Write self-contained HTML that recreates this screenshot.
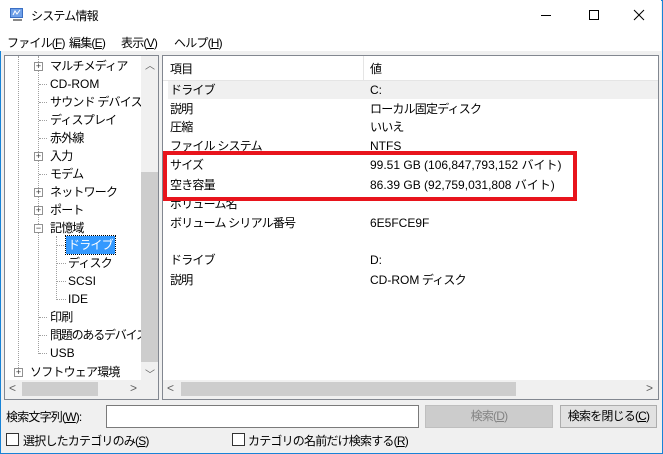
<!DOCTYPE html>
<html><head><meta charset="utf-8"><style>
*{margin:0;padding:0;box-sizing:border-box}
body{width:663px;height:454px;overflow:hidden;font-family:"Liberation Sans","Noto Sans CJK JP",sans-serif;font-size:12px;letter-spacing:-0.8px;color:#000;background:#f0f0f0;position:relative}
.n{letter-spacing:0}
.win{position:absolute;left:0;top:0;width:663px;height:454px;border:1px solid #1883d7}
.abs{position:absolute;white-space:nowrap}
.title{position:absolute;left:0;top:0;width:661px;height:31px;background:#fff}
.menu{position:absolute;left:0;top:31px;width:661px;height:20px;background:#fff}
.pane{position:absolute;background:#fff;border:1px solid #828790}
.t{position:absolute;white-space:nowrap;line-height:18px}
.dl{position:absolute;border-left:1px dotted #a0a0a0}
.dh{position:absolute;border-top:1px dotted #a0a0a0;height:0}
.ex{position:absolute;width:9px;height:9px;border:1px solid #919191;background:#fff;font-size:9px;line-height:7px;text-align:center;color:#333;letter-spacing:0}
.sb{position:absolute;background:#f0f0f0}
.btn{position:absolute;border:1px solid #adadad;background:#e1e1e1;text-align:center;line-height:20px}
.cb{position:absolute;width:13px;height:13px;border:1px solid #333;background:#fff}
u{text-decoration:underline}
</style></head><body>
<div class="win"></div>
<div class="title"></div>
<svg class="abs" style="left:9px;top:7px" width="16" height="16" viewBox="0 0 16 16"><rect x="1" y="1" width="13" height="10" fill="#3a6fc4"/><rect x="2" y="2" width="11" height="8" fill="#6fa0e8"/><path d="M4 8 L6 4 L8 7 L11 3" stroke="#fff" fill="none"/><rect x="4" y="12" width="9" height="2" fill="#888"/></svg>
<div class="abs" style="left:31px;top:7px;font-size:12px">システム情報</div>
<div class="abs" style="left:541px;top:15px;width:10px;height:1px;background:#000"></div>
<div class="abs" style="left:589px;top:10px;width:10px;height:10px;border:1px solid #000"></div>
<svg class="abs" style="left:633px;top:9px" width="12" height="12"><path d="M1 1 L11 11 M11 1 L1 11" stroke="#000" stroke-width="1"/></svg>
<div class="menu"></div>
<div class="abs" style="left:7px;top:34px">ファイル(<u>F</u>)</div>
<div class="abs" style="left:69px;top:34px">編集(<u>E</u>)</div>
<div class="abs" style="left:121px;top:34px">表示(<u>V</u>)</div>
<div class="abs" style="left:174px;top:34px">ヘルプ(<u>H</u>)</div>

<div class="pane" style="left:4px;top:55px;width:155px;height:345px"></div>
<div class="dl" style="left:18px;top:56px;height:316px"></div>
<div class="dl" style="left:38px;top:56px;height:298px"></div>
<div class="dl" style="left:56px;top:236px;height:64px"></div>
<div class="ex" style="left:34px;top:62px">+</div>
<div class="t" style="left:50px;top:57px">マルチメディア</div>
<div class="dh" style="left:39px;top:84px;width:8px"></div><div class="t n" style="left:50px;top:75px">CD-ROM</div>
<div class="dh" style="left:39px;top:102px;width:8px"></div><div class="t" style="left:50px;top:93px">サウンド デバイス</div>
<div class="dh" style="left:39px;top:120px;width:8px"></div><div class="t" style="left:50px;top:111px">ディスプレイ</div>
<div class="dh" style="left:39px;top:138px;width:8px"></div><div class="t" style="left:50px;top:129px">赤外線</div>
<div class="ex" style="left:34px;top:152px">+</div><div class="t" style="left:50px;top:147px">入力</div>
<div class="dh" style="left:39px;top:174px;width:8px"></div><div class="t" style="left:50px;top:165px">モデム</div>
<div class="ex" style="left:34px;top:188px">+</div><div class="t" style="left:50px;top:183px">ネットワーク</div>
<div class="ex" style="left:34px;top:206px">+</div><div class="t" style="left:50px;top:201px">ポート</div>
<div class="ex" style="left:34px;top:224px">−</div><div class="t" style="left:50px;top:219px">記憶域</div>
<div class="dh" style="left:57px;top:245px;width:9px"></div>
<div class="t" style="left:66px;top:236px;background:#3399ff;color:#fff;padding:0 2px;outline:1px dotted #000;height:18px">ドライブ</div>
<div class="dh" style="left:57px;top:263px;width:9px"></div><div class="t" style="left:68px;top:254px">ディスク</div>
<div class="dh" style="left:57px;top:281px;width:9px"></div><div class="t n" style="left:68px;top:272px">SCSI</div>
<div class="dh" style="left:57px;top:299px;width:9px"></div><div class="t n" style="left:68px;top:290px">IDE</div>
<div class="dh" style="left:39px;top:317px;width:8px"></div><div class="t" style="left:50px;top:308px">印刷</div>
<div class="dh" style="left:39px;top:335px;width:8px"></div><div class="t" style="left:50px;top:326px;letter-spacing:-1.2px">問題のあるデバイス</div>
<div class="dh" style="left:39px;top:353px;width:8px"></div><div class="t n" style="left:50px;top:344px">USB</div>
<div class="ex" style="left:14px;top:368px">+</div><div class="t" style="left:30px;top:363px">ソフトウェア環境</div>
<div class="sb" style="left:141px;top:56px;width:17px;height:324px"></div>
<div class="abs" style="left:141px;top:172px;width:17px;height:190px;background:#cdcdcd"></div>
<div class="abs" style="left:145px;top:57px;font-size:10px;color:#606060">︿</div>
<div class="abs" style="left:145px;top:366px;font-size:10px;color:#606060">﹀</div>
<div class="sb" style="left:5px;top:380px;width:153px;height:19px"></div>
<div class="abs" style="left:22px;top:382px;width:76px;height:14px;background:#cdcdcd"></div>
<div class="abs" style="left:9px;top:381px;color:#606060">&lt;</div>
<div class="abs" style="left:130px;top:381px;color:#606060">&gt;</div>

<div class="pane" style="left:162px;top:55px;width:497px;height:345px"></div>
<div class="abs" style="left:163px;top:56px;width:495px;height:25px;background:#fff;border-bottom:1px solid #e5e5e5"></div>
<div class="abs" style="left:363px;top:56px;width:1px;height:24px;background:#e5e5e5"></div>
<div class="t" style="left:170px;top:60px">項目</div>
<div class="t" style="left:370px;top:60px">値</div>
<div class="abs" style="left:168px;top:81px;width:490px;height:18px;background:#f0f0f0"></div>
<div class="t" style="left:170px;top:81px">ドライブ</div><div class="t n" style="left:370px;top:81px">C:</div>
<div class="t" style="left:170px;top:100px">説明</div><div class="t" style="left:370px;top:100px">ローカル固定ディスク</div>
<div class="t" style="left:170px;top:118px">圧縮</div><div class="t" style="left:370px;top:118px">いいえ</div>
<div class="t" style="left:170px;top:137px">ファイル システム</div><div class="t n" style="left:370px;top:137px">NTFS</div>
<div class="t" style="left:170px;top:156px">サイズ</div><div class="t n" style="left:370px;top:156px">99.51 GB (106,847,793,152 バイト)</div>
<div class="t" style="left:170px;top:176px">空き容量</div><div class="t n" style="left:370px;top:176px">86.39 GB (92,759,031,808 バイト)</div>
<div class="t" style="left:170px;top:195px">ボリューム名</div>
<div class="t" style="left:170px;top:214px">ボリューム シリアル番号</div><div class="t n" style="left:370px;top:214px">6E5FCE9F</div>
<div class="t" style="left:170px;top:251px">ドライブ</div><div class="t n" style="left:370px;top:251px">D:</div>
<div class="t" style="left:170px;top:271px">説明</div><div class="t" style="left:370px;top:271px"><span class="n">CD-ROM</span> ディスク</div>
<div class="abs" style="left:163px;top:151px;width:414px;height:50px;border:4px solid #e8141c"></div>
<div class="sb" style="left:163px;top:380px;width:495px;height:19px"></div>
<div class="abs" style="left:181px;top:382px;width:335px;height:14px;background:#cdcdcd"></div>
<div class="abs" style="left:167px;top:381px;color:#606060">&lt;</div>
<div class="abs" style="left:646px;top:381px;color:#606060">&gt;</div>

<div class="abs" style="left:6px;top:408px">検索文字列(<u>W</u>):</div>
<div class="abs" style="left:106px;top:405px;width:313px;height:23px;background:#fff;border:1px solid #7a7a7a"></div>
<div class="btn" style="left:425px;top:405px;width:128px;height:23px;background:#cccccc;border-color:#bfbfbf;color:#838383">検索(<u>D</u>)</div>
<div class="btn" style="left:560px;top:405px;width:97px;height:23px">検索を閉じる(<u>C</u>)</div>
<div class="cb" style="left:6px;top:433px"></div>
<div class="abs" style="left:23px;top:432px">選択したカテゴリのみ(<u>S</u>)</div>
<div class="cb" style="left:232px;top:433px"></div>
<div class="abs" style="left:248px;top:432px">カテゴリの名前だけ検索する(<u>R</u>)</div>
</body></html>
